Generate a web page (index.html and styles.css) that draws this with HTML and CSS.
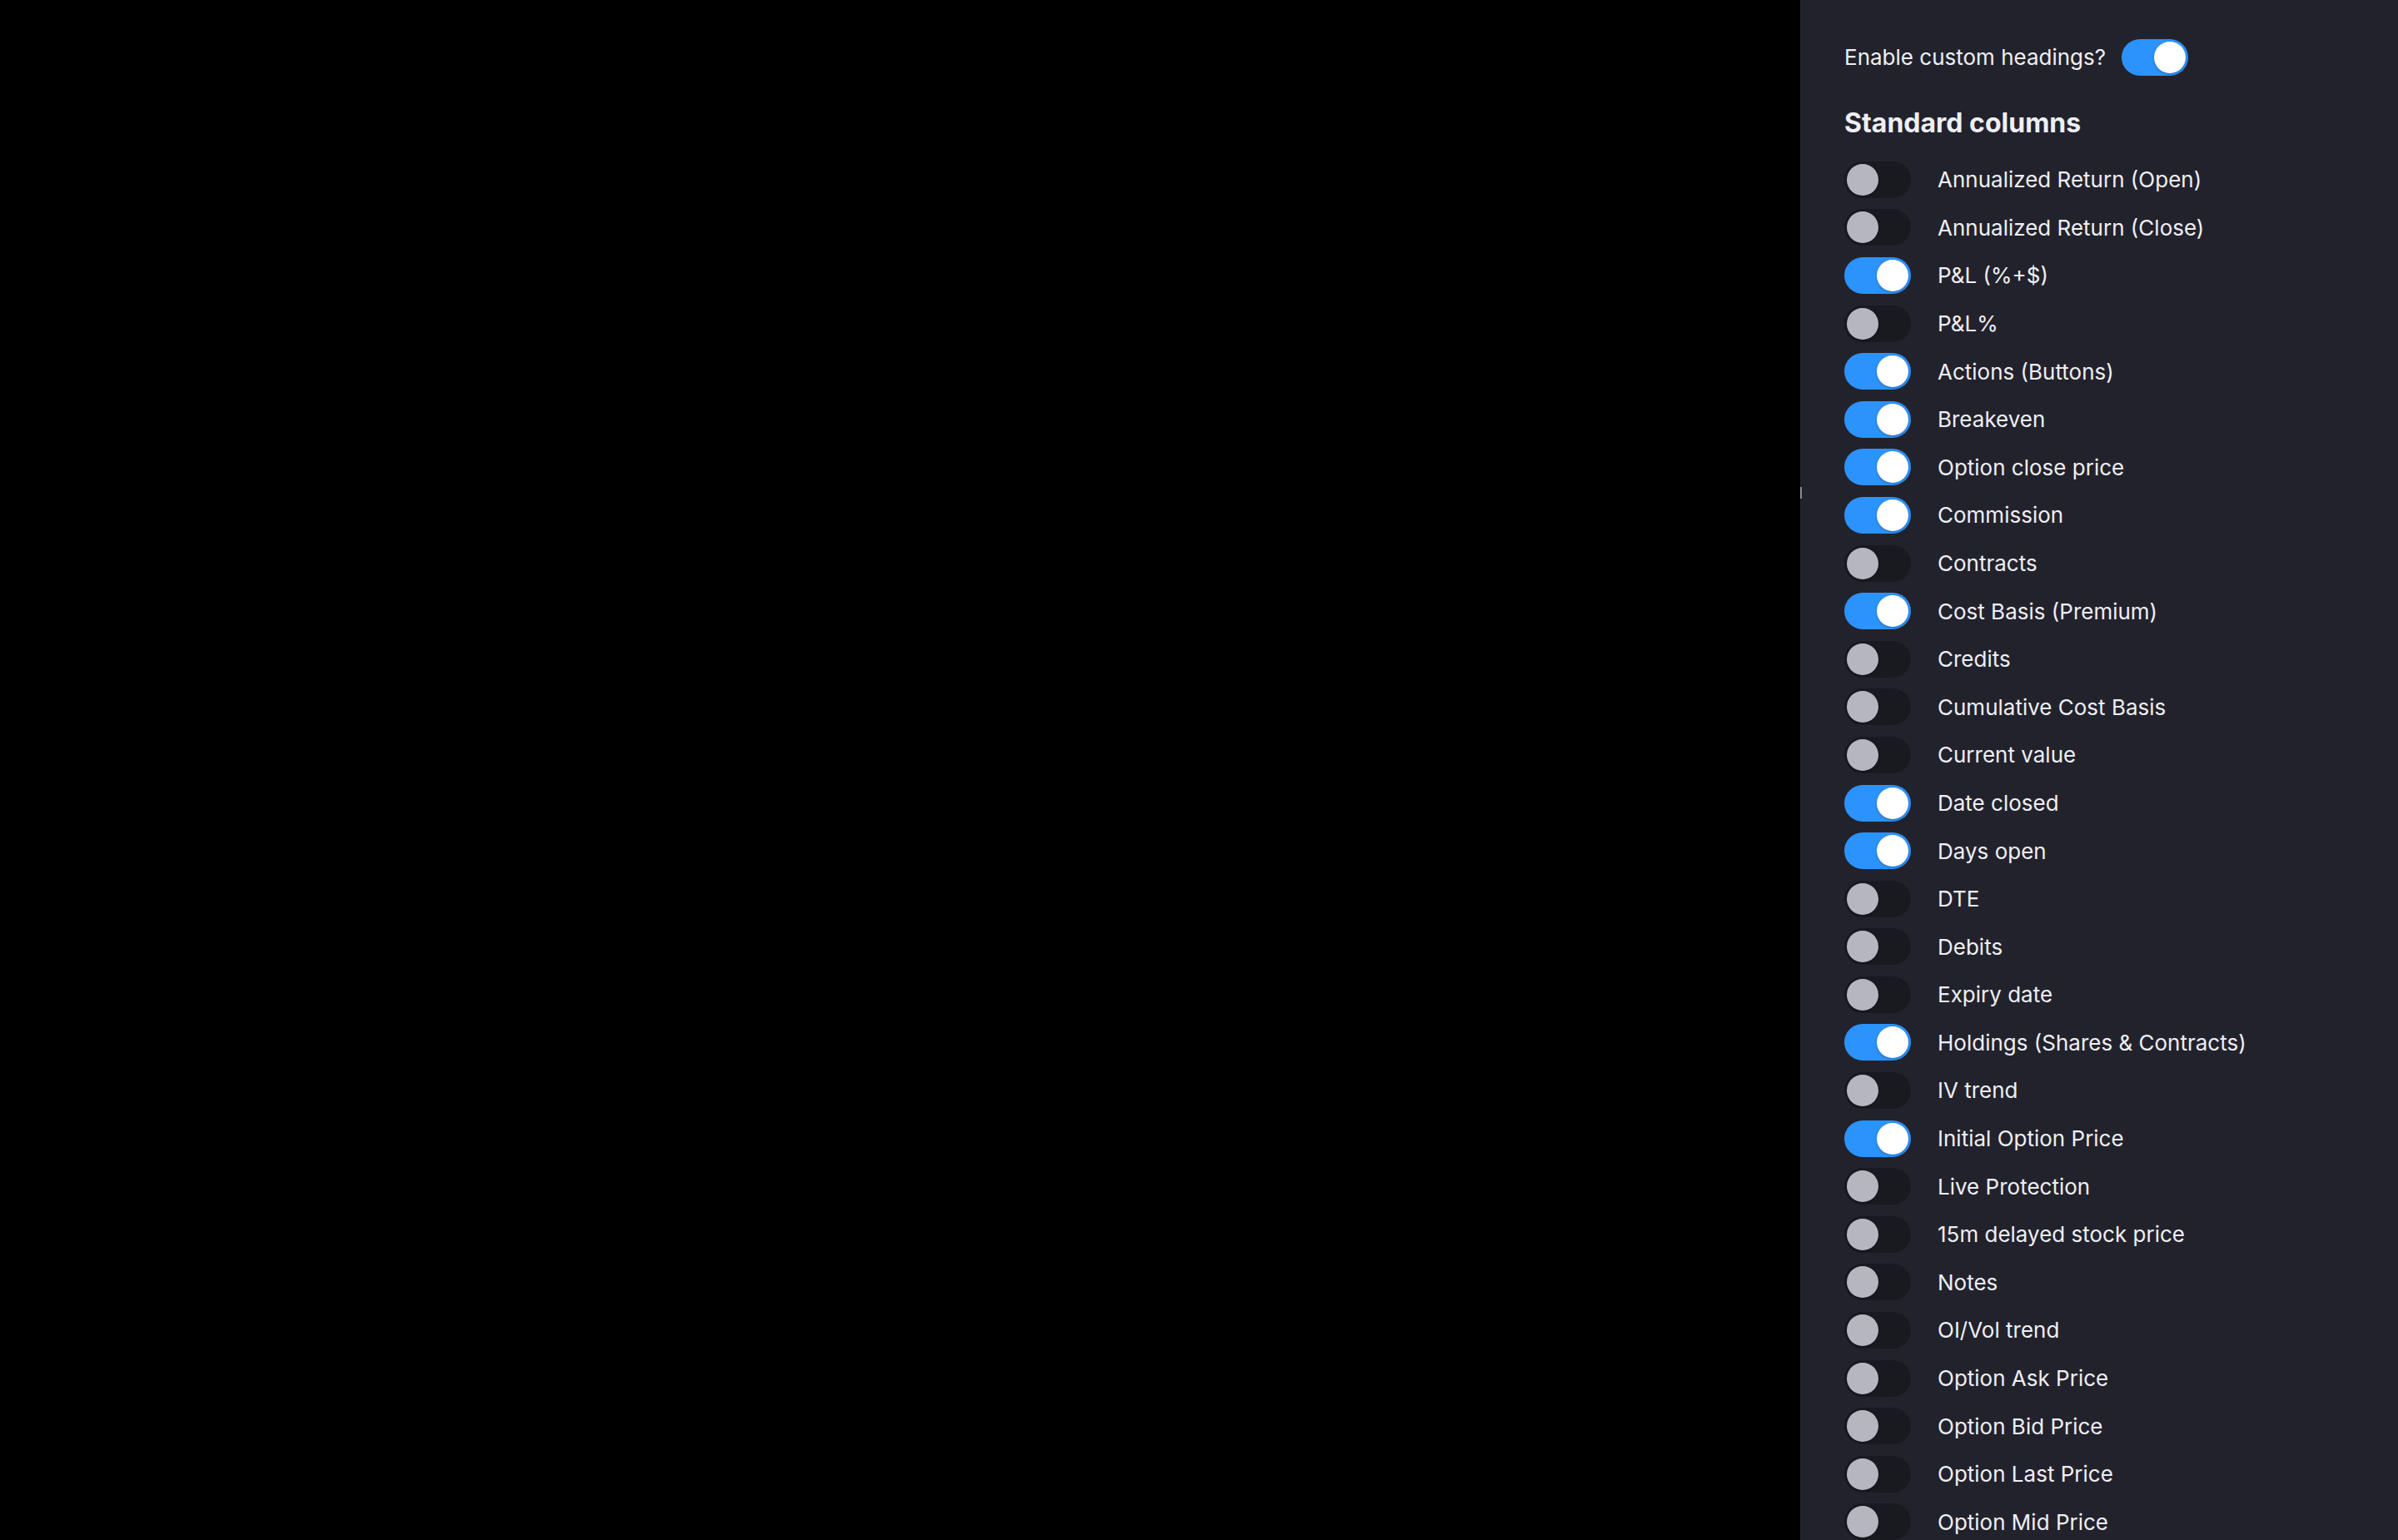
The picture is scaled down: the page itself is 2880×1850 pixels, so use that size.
FILE: index.html
```html
<!DOCTYPE html>
<html lang="en">
<head>
<meta charset="utf-8">
<title>Column settings</title>
<link rel="stylesheet" href="styles.css">
</head>
<body>
<div class="app">
  <main class="canvas"></main>
  <aside class="panel">
    <span class="resize-handle"></span>
    <div class="top-row">
      <span class="label">Enable custom headings?</span>
      <span class="switch on"><span class="knob"></span></span>
    </div>
    <h2 class="heading">Standard columns</h2>
    <ul class="columns">
      <li class="row"><span class="switch"><span class="knob"></span></span><span class="label">Annualized Return (Open)</span></li>
      <li class="row"><span class="switch"><span class="knob"></span></span><span class="label">Annualized Return (Close)</span></li>
      <li class="row"><span class="switch on"><span class="knob"></span></span><span class="label">P&amp;L (%+$)</span></li>
      <li class="row"><span class="switch"><span class="knob"></span></span><span class="label">P&amp;L%</span></li>
      <li class="row"><span class="switch on"><span class="knob"></span></span><span class="label">Actions (Buttons)</span></li>
      <li class="row"><span class="switch on"><span class="knob"></span></span><span class="label">Breakeven</span></li>
      <li class="row"><span class="switch on"><span class="knob"></span></span><span class="label">Option close price</span></li>
      <li class="row"><span class="switch on"><span class="knob"></span></span><span class="label">Commission</span></li>
      <li class="row"><span class="switch"><span class="knob"></span></span><span class="label">Contracts</span></li>
      <li class="row"><span class="switch on"><span class="knob"></span></span><span class="label">Cost Basis (Premium)</span></li>
      <li class="row"><span class="switch"><span class="knob"></span></span><span class="label">Credits</span></li>
      <li class="row"><span class="switch"><span class="knob"></span></span><span class="label">Cumulative Cost Basis</span></li>
      <li class="row"><span class="switch"><span class="knob"></span></span><span class="label">Current value</span></li>
      <li class="row"><span class="switch on"><span class="knob"></span></span><span class="label">Date closed</span></li>
      <li class="row"><span class="switch on"><span class="knob"></span></span><span class="label">Days open</span></li>
      <li class="row"><span class="switch"><span class="knob"></span></span><span class="label">DTE</span></li>
      <li class="row"><span class="switch"><span class="knob"></span></span><span class="label">Debits</span></li>
      <li class="row"><span class="switch"><span class="knob"></span></span><span class="label">Expiry date</span></li>
      <li class="row"><span class="switch on"><span class="knob"></span></span><span class="label">Holdings (Shares &amp; Contracts)</span></li>
      <li class="row"><span class="switch"><span class="knob"></span></span><span class="label">IV trend</span></li>
      <li class="row"><span class="switch on"><span class="knob"></span></span><span class="label">Initial Option Price</span></li>
      <li class="row"><span class="switch"><span class="knob"></span></span><span class="label">Live Protection</span></li>
      <li class="row"><span class="switch"><span class="knob"></span></span><span class="label">15m delayed stock price</span></li>
      <li class="row"><span class="switch"><span class="knob"></span></span><span class="label">Notes</span></li>
      <li class="row"><span class="switch"><span class="knob"></span></span><span class="label">OI/Vol trend</span></li>
      <li class="row"><span class="switch"><span class="knob"></span></span><span class="label">Option Ask Price</span></li>
      <li class="row"><span class="switch"><span class="knob"></span></span><span class="label">Option Bid Price</span></li>
      <li class="row"><span class="switch"><span class="knob"></span></span><span class="label">Option Last Price</span></li>
      <li class="row"><span class="switch"><span class="knob"></span></span><span class="label">Option Mid Price</span></li>
    </ul>
  </aside>
</div>
</body>
</html>
```

FILE: styles.css
```css
html, body {
  margin: 0;
  padding: 0;
  height: 1850px;
  overflow: hidden;
  background: #000000;
}

body {
  font-family: Inter, "Noto Sans", "Liberation Sans", sans-serif;
  color: #efeff2;
}

.app {
  display: flex;
  width: 2880px;
  height: 1850px;
}

.canvas {
  flex: 1;
  background: #000000;
}

.panel {
  position: relative;
  width: 718px;
  flex: none;
  background: #22222d;
  padding: 47px 0 0 53px;
  box-sizing: border-box;
  overflow: hidden;
}

.resize-handle {
  position: absolute;
  left: 0;
  top: 585px;
  width: 2px;
  height: 14px;
  background: #8a8a92;
}

.top-row {
  display: flex;
  align-items: center;
  gap: 19px;
  height: 44px;
}

.label {
  font-size: 26px;
  line-height: 1.2;
  font-weight: 400;
  color: #efeff2;
  white-space: nowrap;
}

.heading {
  margin: 38px 0 20px;
  font-size: 32px;
  line-height: 38px;
  font-weight: 700;
  color: #efeff2;
}

.columns {
  list-style: none;
  margin: 0;
  padding: 0;
}

.row {
  display: flex;
  align-items: center;
  gap: 32px;
  height: 57.6px;
}

.switch {
  position: relative;
  display: inline-block;
  flex: none;
  width: 80px;
  height: 44px;
  border-radius: 22px;
  background: #191920;
}

.switch.on {
  background: #2b93fb;
}

.knob {
  position: absolute;
  top: 3px;
  left: 3px;
  width: 38px;
  height: 38px;
  border-radius: 50%;
  background: #b6b6c0;
  box-shadow: 0 1px 3px rgba(0, 0, 0, 0.25);
}

.switch.on .knob {
  left: 39px;
  background: #ffffff;
}
```
